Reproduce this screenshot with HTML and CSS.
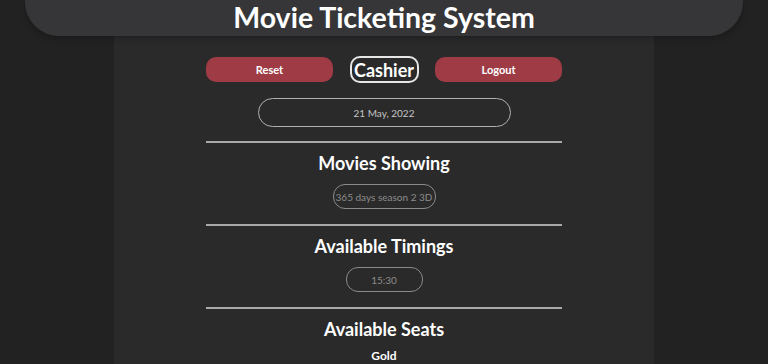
FILE: index.html
```html
<!DOCTYPE html>
<html>
<head>
<meta charset="utf-8">
<link rel="stylesheet" href="styles.css">
</head>
<body>
<header class="topbar">
  <h1 class="title">Movie Ticketing System</h1>
</header>
<main class="panel">
  <div class="actions">
    <button class="btn btn-red">Reset</button>
    <div class="role">Cashier</div>
    <button class="btn btn-red">Logout</button>
  </div>
  <div class="date">21 May, 2022</div>
  <section class="section">
    <h2 class="heading">Movies Showing</h2>
    <div class="chips"><span class="chip chip-movie">365 days season 2 3D</span></div>
  </section>
  <section class="section">
    <h2 class="heading">Available Timings</h2>
    <div class="chips"><span class="chip chip-time">15:30</span></div>
  </section>
  <section class="section">
    <h2 class="heading">Available Seats</h2>
    <div class="tier">Gold</div>
  </section>
</main>
</body>
</html>
```
FILE: styles.css
```css
* { box-sizing: border-box; }
html, body { margin: 0; padding: 0; }
body {
  background: #222222;
  font-family: "Lato", "Open Sans", sans-serif;
  color: #f2f2f2;
  height: 364px;
  overflow: hidden;
  display: flex;
  flex-direction: column;
  align-items: center;
}
.topbar {
  position: relative;
  z-index: 2;
  width: 718px;
  height: 36px;
  background: #363638;
  border-radius: 0 0 34px 34px;
  box-shadow: 0 3px 6px rgba(0,0,0,0.25);
  display: flex;
  justify-content: center;
  align-items: center;
  flex-shrink: 0;
}
.title {
  margin: 0;
  font-size: 28.5px;
  font-weight: 700;
  line-height: 34px;
  color: #ffffff;
  padding-bottom: 2px;
}
.panel {
  width: 540px;
  flex: 1;
  background: #2a2a2a;
  display: flex;
  flex-direction: column;
  align-items: center;
  padding-top: 20px;
}
.actions {
  width: 356px;
  display: flex;
  justify-content: space-between;
  align-items: center;
}
.btn {
  width: 127px;
  height: 25px;
  border: none;
  border-radius: 10px;
  font-family: inherit;
  font-size: 11px;
  font-weight: 700;
  color: #fff;
  cursor: pointer;
}
.btn-red { background: #9e3b45; }
.role {
  height: 27px;
  width: 69px;
  border: 2px solid #e6e6e6;
  border-radius: 10px;
  display: flex;
  align-items: center;
  justify-content: center;
  font-size: 18px;
  font-weight: 700;
  color: #fff;
}
.date {
  margin-top: 15px;
  width: 253px;
  height: 29px;
  border: 1.5px solid #b0b0b0;
  border-radius: 15px;
  display: flex;
  align-items: center;
  justify-content: center;
  font-size: 10px;
  color: #c4c4c4;
}
.section {
  margin-top: 14px;
  width: 356px;
  border-top: 2px solid #a8a8a8;
  display: flex;
  flex-direction: column;
  align-items: center;
}
.section + .section { margin-top: 15px; }
.heading {
  margin: 8px 0 0;
  font-size: 18px;
  line-height: 24px;
  font-weight: 700;
  color: #fff;
}
.chips {
  margin-top: 9px;
  display: flex;
  justify-content: center;
}
.chip {
  height: 25px;
  border: 1px solid #8a8a8a;
  border-radius: 12px;
  display: flex;
  align-items: center;
  justify-content: center;
  font-size: 10px;
  color: #8c8c8c;
}
.chip-movie { width: 103px; }
.chip-time { width: 77px; }
.tier {
  margin-top: 7px;
  font-size: 12px;
  line-height: 16px;
  font-weight: 700;
  color: #fff;
}
```
